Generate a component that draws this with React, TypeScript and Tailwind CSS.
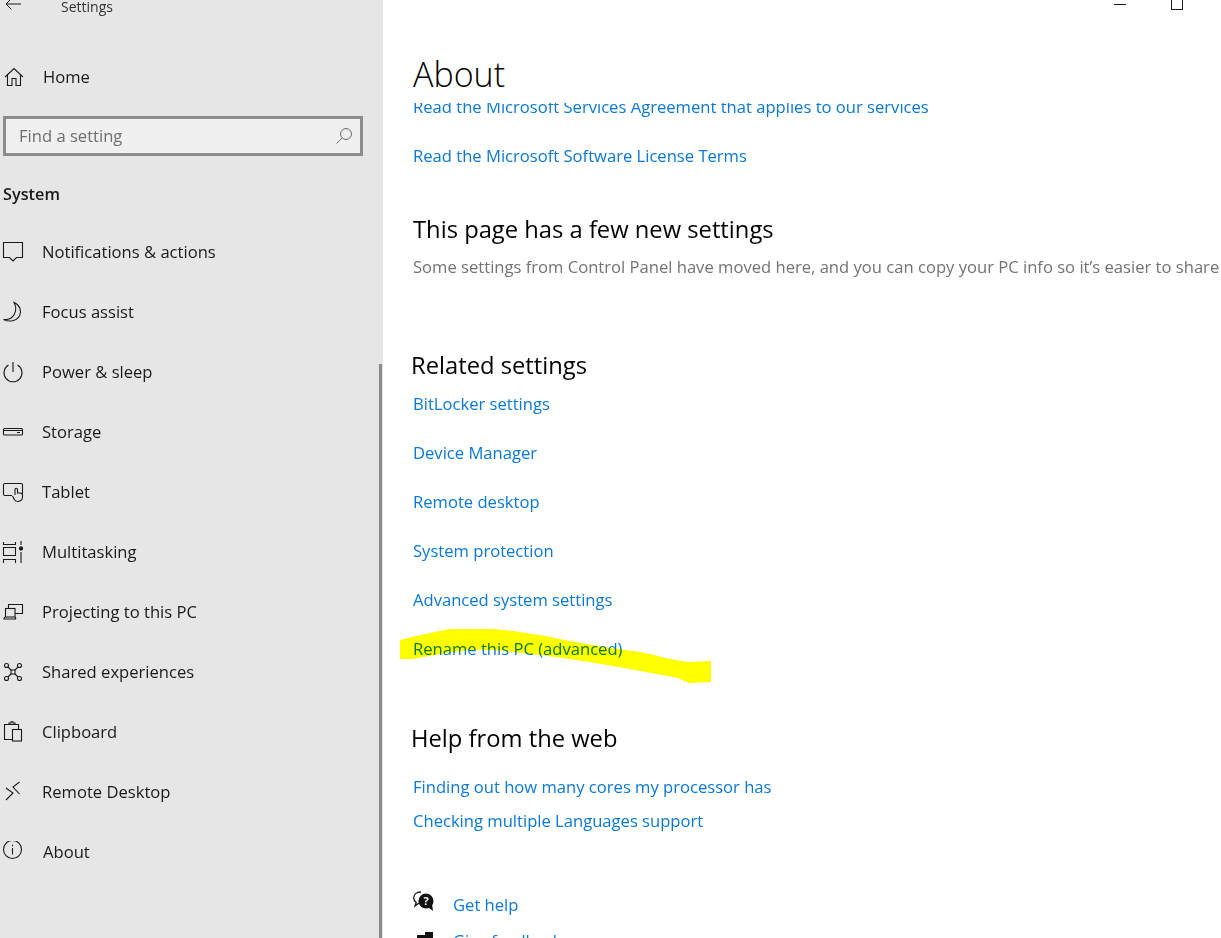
import type { ReactNode } from "react";

function Ico({ children }: { children: ReactNode }) {
  return (
    <svg width="24" height="22" viewBox="0 0 24 22" fill="none" stroke="#1a1a1a" strokeWidth="1.1" className="shrink-0">
      {children}
    </svg>
  );
}

const navItems: { label: string; textClass: string; icon: ReactNode }[] = [
  {
    label: "Notifications & actions",
    textClass: "ml-[18px]",
    icon: (
      <Ico>
        <path d="M3.5 1.5h19v15h-6L13 20l-3.5-3.5h-6z" />
      </Ico>
    ),
  },
  {
    label: "Focus assist",
    textClass: "ml-[18px]",
    icon: (
      <Ico>
        <path d="M14 1.5c6 2.5 8 8.5 5.500 13.500-3 5-10 6.500-16 3.500 5 .5 9-1.500 11-5.500 2-4 1.500-8-.5-11.500z" />
      </Ico>
    ),
  },
  {
    label: "Power & sleep",
    textClass: "ml-[18px]",
    icon: (
      <Ico>
        <path d="M8.5 4a9 9 0 1 0 9 0M13 1v10" />
      </Ico>
    ),
  },
  {
    label: "Storage",
    textClass: "ml-[18px]",
    icon: (
      <Ico>
        <rect x="3.5" y="7.5" width="19" height="6.5" rx="1" />
        <path d="M3.5 9.5h19M17 11.5h3" />
      </Ico>
    ),
  },
  {
    label: "Tablet",
    textClass: "ml-[18px]",
    icon: (
      <Ico>
        <path d="M12 14.5H5A1.5 1.5 0 0 1 3.5 13V4A1.5 1.5 0 0 1 5 2.5h16A1.5 1.5 0 0 1 22.5 4v9" />
        <path d="M15 14V8.5a1.2 1.2 0 0 1 2.5 0V12H20a2.5 2.5 0 0 1 2.5 2.5V16a4.5 4.5 0 0 1-8.5 2l-1.5-3" />
      </Ico>
    ),
  },
  {
    label: "Multitasking",
    textClass: "ml-[18px]",
    icon: (
      <Ico>
        <path d="M3.5 1v2.5h12V1M3.500 6.500h12v8h-12zM3.500 22v-3.500h12V22" />
        <circle cx="21" cy="7.5" r="1.6" fill="#1a1a1a" />
        <path d="M21 0v4M21 11v11" />
      </Ico>
    ),
  },
  {
    label: "Projecting to this PC",
    textClass: "ml-[18px]",
    icon: (
      <Ico>
        <path d="M8.5 7V3.500h14v9H15" />
        <rect x="5.5" y="7.5" width="9.5" height="8.5" />
        <path d="M3.5 18H16M3.500 18L5 16M16 18l-1-2" />
      </Ico>
    ),
  },
  {
    label: "Shared experiences",
    textClass: "ml-[18px]",
    icon: (
      <Ico>
        <circle cx="6.5" cy="4.5" r="2" />
        <circle cx="19.5" cy="4.5" r="2" />
        <circle cx="6.5" cy="17.5" r="2" />
        <circle cx="19.5" cy="17.5" r="2" />
        <rect x="11" y="9" width="4" height="4" />
        <path d="M8 6l3 3M18 6l-3 3M8 16l3-3M18 16l-3-3" />
      </Ico>
    ),
  },
  {
    label: "Clipboard",
    textClass: "ml-[18px]",
    icon: (
      <Ico>
        <path d="M12 18.5H4.5v-15h14v5M9 3.5V2h2V.8h2V2h2v1.500" />
        <rect x="12.5" y="8.5" width="9" height="11.5" />
      </Ico>
    ),
  },
  {
    label: "Remote Desktop",
    textClass: "ml-[18px]",
    icon: (
      <Ico>
        <path d="M6 7l7 5-7 7M19.5 1L13 6l6.500 7" />
      </Ico>
    ),
  },
  {
    label: "About",
    textClass: "ml-[19px]",
    icon: (
      <Ico>
        <circle cx="12.5" cy="8.5" r="9" />
        <path d="M12.5 7v6.500M12.500 3.800v1.500" />
      </Ico>
    ),
  },
];

const relatedLinks = ["BitLocker settings", "Device Manager", "Remote desktop", "System protection", "Advanced system settings"];

export default function App() {
  return (
    <div className="flex h-[938px] w-[1221px] overflow-hidden bg-white font-['Open_Sans','Noto_Sans',sans-serif] text-[16.6px] text-[#1a1a1a]">
      <aside className="relative flex w-[383px] shrink-0 flex-col bg-[#e6e6e6]">
        <div className="flex h-[13px] items-center overflow-visible pl-[5px]">
          <svg width="16" height="12" viewBox="0 0 16 12" fill="none" stroke="#1a1a1a" strokeWidth="1" className="-mt-[6px] shrink-0">
            <path d="M16 6H1M6.5 .5L1 6l5.500 5.500" />
          </svg>
          <span className="ml-[40px] text-[14px] text-[#333333]">Settings</span>
        </div>
        <div className="mt-[49px] flex h-[30px] items-center pl-[4px]">
          <svg width="20" height="20" viewBox="0 0 20 20" fill="none" stroke="#1a1a1a" strokeWidth="1.1">
            <path d="M1 10L10 1.5 19 10M3.5 8v10.500h4.500v-7h4v7h4.500V8" />
          </svg>
          <span className="ml-[19px]">Home</span>
        </div>
        <div className="ml-[3px] mt-[24px] flex h-[40px] w-[360px] items-center justify-between border-[3px] border-[#8c8c8c] bg-[#f0f0f0] pl-[13px] pr-[7px] text-[#6e6e6e]">
          <span>Find a setting</span>
          <svg width="18" height="18" viewBox="0 0 18 18" fill="none" stroke="#6e6e6e" strokeWidth="1">
            <circle cx="11" cy="7" r="5.5" />
            <path d="M7 11l-5.500 5.500" />
          </svg>
        </div>
        <div className="mt-[24px] pl-[3px] text-[16.3px] font-semibold leading-[28px]">System</div>
        <nav className="mt-[29px] flex flex-col gap-[30px]">
          {navItems.map((item) => (
            <div key={item.label} className="flex h-[30px] items-center">
              {item.icon}
              <span className={`${item.textClass} whitespace-nowrap`}>{item.label}</span>
            </div>
          ))}
        </nav>
        <div className="absolute right-[1px] top-[364px] bottom-0 w-[3px] bg-[#8a8a8a]" />
      </aside>

      <main className="relative min-w-0 flex-1 pl-[30px]">
        <div className="relative z-20 flex h-[5px] justify-end">
          <span className="mt-[4px] h-[1px] w-[12px] bg-[#1a1a1a]" />
          <span className="-mt-[2px] ml-[45px] mr-[38px] h-[12px] w-[12px] border border-[#1a1a1a]" />
        </div>
        {/* the list scrolls under this white title block, so the first link is cut */}
        <div className="relative z-10 -mr-1 h-[98px] bg-white pt-[46px] text-[34px] font-light leading-[46px] text-black">About</div>
        <div className="-mt-[1px] flex flex-col text-[#0a78d4]">
          <div className="-mt-[10px] h-[30px] leading-[30px]">Read the Microsoft Services Agreement that applies to our services</div>
          <div className="mt-[19px] h-[30px] leading-[30px]">Read the Microsoft Software License Terms</div>
        </div>
        <h2 className="mt-[41px] text-[23.75px] leading-[34px] text-black">This page has a few new settings</h2>
        <p className="mt-[8px] whitespace-nowrap leading-[26px] text-[#737373]">Some settings from Control Panel have moved here, and you can copy your PC info so it’s easier to share</p>
        <h2 className="-ml-[2px] mt-[68px] text-[23.75px] leading-[34px] text-black">Related settings</h2>
        <div className="mt-[7px] flex flex-col gap-[19px] text-[#0a78d4]">
          {relatedLinks.map((l) => (
            <div key={l} className="h-[30px] leading-[30px]">{l}</div>
          ))}
          <div className="h-[30px] leading-[30px]">Rename this PC (advanced)</div>
        </div>
        <h2 className="-ml-[2px] mt-[57px] text-[23.75px] leading-[34px] text-black">Help from the web</h2>
        <div className="mt-[17px] flex flex-col gap-[4px] text-[#0a78d4]">
          <div className="h-[30px] leading-[30px]">Finding out how many cores my processor has</div>
          <div className="h-[30px] leading-[30px]">Checking multiple Languages support</div>
        </div>
        <div className="mt-[54px] flex h-[30px] items-center">
          <svg width="22" height="22" viewBox="0 0 22 22" className="-mt-[6px] shrink-0">
            <path d="M8 1C3.5 1 .7 3.500.7 7c0 2 1 3.500 2.500 4.500L2 15l4-3" fill="none" stroke="#111111" strokeWidth="1.3" />
            <circle cx="13" cy="10" r="7.5" fill="#111111" />
            <path d="M15 16l5 4-1-7z" fill="#111111" />
            <text x="13" y="14" fontSize="11" fontWeight="700" textAnchor="middle" fill="#ffffff">?</text>
          </svg>
          <span className="ml-[18px] text-[#0a78d4]">Get help</span>
        </div>
        <div className="mt-[6px] flex h-[30px] items-center">
          <svg width="22" height="22" viewBox="0 0 22 22" className="shrink-0">
            <path d="M12 2h8v10h-8z" fill="#111111" />
            <path d="M4 5h10v10H4z" fill="#111111" />
          </svg>
          <span className="ml-[18px] text-[#0a78d4]">Give feedback</span>
        </div>
        <svg width="312" height="56" viewBox="0 0 312 56" className="pointer-events-none absolute left-[17px] top-[628px] mix-blend-multiply">
          <path d="M0 12C15 8 30 5 50 1L90 1C110 2 125 5 140 7C170 13 205 20 240 24C260 28 275 33 290 34C298 34 305 33 311 33L311 54L290 55C283 53 280 50 273 49C240 43 190 33 140 27C120 25 105 22 90 22C75 20 50 24 13 31L0 31Z" fill="#ffff00" />
        </svg>
      </main>
    </div>
  );
}
